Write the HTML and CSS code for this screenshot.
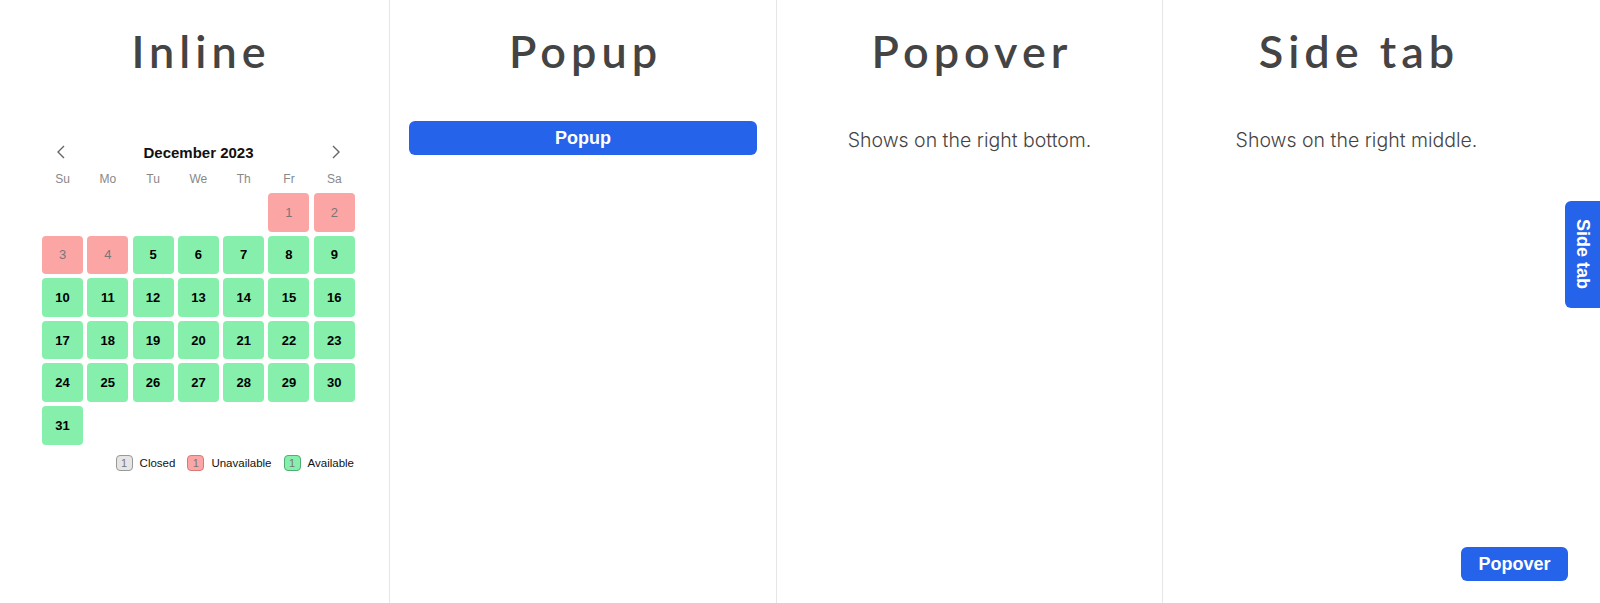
FILE: index.html
```html
<!DOCTYPE html>
<html lang="en">
<head>
    <meta charset="UTF-8">
    <meta name="viewport" content="width=device-width, initial-scale=1.0">
    <title>Booking widgets</title>
    <link rel="stylesheet" href="styles.css">
</head>
<body>

    <div class="columns">
        <section class="col first">
            <h2>Inline</h2>
            <div class="calendar">
                <div class="cal-head">
                    <button class="nav" aria-label="Previous month">
                        <svg width="8" height="14" viewBox="0 0 8 14"><polyline points="7,1 1,7 7,13" fill="none" stroke="#666" stroke-width="1.4"/></svg>
                    </button>
                    <span class="month">December 2023</span>
                    <button class="nav" aria-label="Next month">
                        <svg width="8" height="14" viewBox="0 0 8 14"><polyline points="1,1 7,7 1,13" fill="none" stroke="#666" stroke-width="1.4"/></svg>
                    </button>
                </div>
                <div class="weekdays">
                    <span>Su</span>
                    <span>Mo</span>
                    <span>Tu</span>
                    <span>We</span>
                    <span>Th</span>
                    <span>Fr</span>
                    <span>Sa</span>
                </div>
                <div class="days" id="days"></div>
                <div class="legend">
                    <span class="key closed">1</span><span class="key-label">Closed</span>
                    <span class="key unavailable">1</span><span class="key-label">Unavailable</span>
                    <span class="key available">1</span><span class="key-label">Available</span>
                </div>
            </div>
        </section>

        <section class="col">
            <h2>Popup</h2>
            <button class="btn btn-wide">Popup</button>
        </section>

        <section class="col">
            <h2>Popover</h2>
            <p class="desc">Shows on the right bottom.</p>
        </section>

        <section class="col last">
            <h2>Side tab</h2>
            <p class="desc">Shows on the right middle.</p>
        </section>
    </div>

    <button class="side-tab">Side tab</button>
    <button class="btn popover">Popover</button>

    <script>
        const days = document.getElementById('days');
        // December 2023 starts on Friday
        for (let i = 0; i < 5; i++) {
            days.appendChild(document.createElement('span'));
        }
        for (let d = 1; d <= 31; d++) {
            const cell = document.createElement('span');
            cell.textContent = d;
            cell.className = 'day ' + (d <= 4 ? 'unavailable' : 'available');
            days.appendChild(cell);
        }
    </script>

</body>
</html>
```

FILE: styles.css
```css
* {
    margin: 0;
    padding: 0;
    box-sizing: border-box;
}

body {
    height: 603px;
    overflow: hidden;
    background: #fff;
    font-family: "Liberation Sans", Arial, sans-serif;
}

.columns {
    display: grid;
    grid-template-columns: 390px 387px 386px 387px;
    height: 100%;
}

.col {
    border-right: 1px solid #e6e6e6;
    padding: 0 19px;
    text-align: center;
}

.col.first {
    padding: 0 15px 0 23px;
}

.col.last {
    border-right: none;
}

h2 {
    font-family: Lato, "Noto Sans", sans-serif;
    font-weight: 600;
    font-size: 45px;
    line-height: 54px;
    letter-spacing: 5px;
    text-indent: 5px;
    color: #444;
    padding-top: 24px;
    height: 121px;
}

.desc {
    font-family: Inter, sans-serif;
    font-weight: 300;
    font-size: 19.5px;
    color: #444;
    margin-top: 7px;
}

.btn {
    background: #2563eb;
    color: #fff;
    border: none;
    border-radius: 6px;
    font-family: "Liberation Sans", Arial, sans-serif;
    font-weight: bold;
    font-size: 18px;
    cursor: pointer;
}

.btn-wide {
    display: block;
    width: 100%;
    height: 34px;
}

/* calendar */
.calendar {
    width: 313px;
    margin: 0 auto;
}

.cal-head {
    display: flex;
    justify-content: space-between;
    align-items: center;
    height: 20px;
    padding: 0 15px;
    margin-top: 21px;
}

.nav {
    background: none;
    border: none;
    display: flex;
    cursor: pointer;
}

.month {
    font-weight: bold;
    font-size: 15px;
    color: #111;
}

.weekdays,
.days {
    display: grid;
    grid-template-columns: repeat(7, 41px);
    column-gap: 4.3px;
}

.weekdays {
    font-size: 12px;
    color: #888;
    height: 20px;
    line-height: 20px;
    margin-top: 7px;
    margin-bottom: 4px;
}

.days {
    grid-auto-rows: 38.6px;
    row-gap: 4px;
}

.day {
    display: flex;
    align-items: center;
    justify-content: center;
    border-radius: 4px;
    font-size: 13px;
}

.day.unavailable {
    background: #fca5a5;
    color: #777;
}

.day.available {
    background: #86efac;
    color: #000;
    font-weight: bold;
}

.legend {
    display: flex;
    justify-content: flex-end;
    align-items: center;
    margin-top: 10px;
    font-size: 11.5px;
    color: #111;
}

.key {
    width: 17px;
    height: 16px;
    border-radius: 4px;
    border: 1px solid #999;
    font-size: 11px;
    line-height: 14px;
    color: #777;
    margin-right: 7px;
}

.key.closed {
    background: #e5e5e5;
}

.key.unavailable {
    background: #fca5a5;
    border-color: #d97a7a;
}

.key.available {
    background: #86efac;
    border-color: #4fae74;
}

.key-label {
    margin-right: 12px;
}

.key-label:last-child {
    margin-right: 1px;
}

/* floating widgets */
.side-tab {
    position: fixed;
    right: 0;
    top: 201px;
    width: 35px;
    height: 107px;
    background: #2563eb;
    color: #fff;
    border: none;
    border-radius: 6px 0 0 6px;
    writing-mode: vertical-rl;
    font-family: "Liberation Sans", Arial, sans-serif;
    font-weight: bold;
    font-size: 18px;
    cursor: pointer;
}

.popover {
    position: fixed;
    right: 32px;
    bottom: 22px;
    width: 107px;
    height: 34px;
}
```
